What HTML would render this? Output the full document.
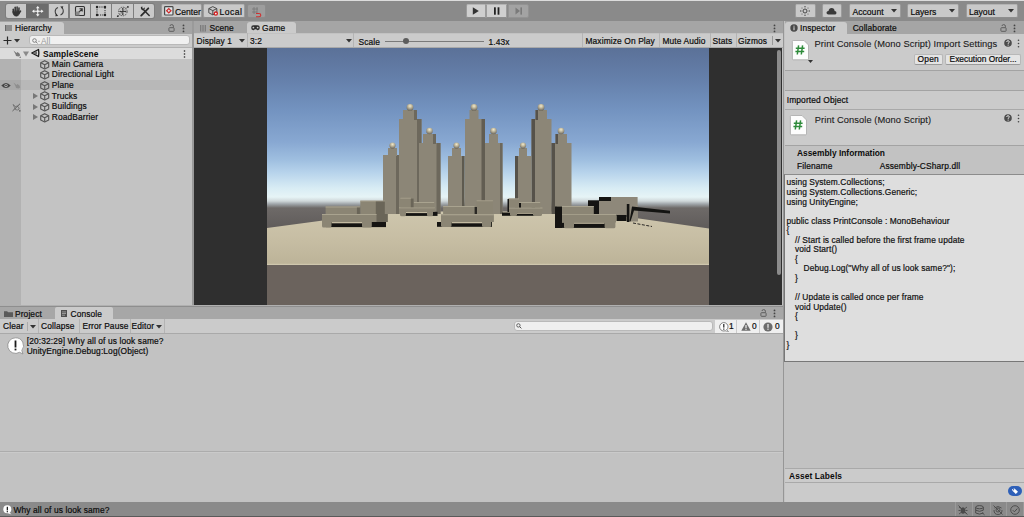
<!DOCTYPE html>
<html><head><meta charset="utf-8">
<style>
*{margin:0;padding:0;box-sizing:border-box}
html,body{width:1024px;height:517px;overflow:hidden;background:#c2c2c2}
body{position:relative;font-family:"Liberation Sans",sans-serif;font-size:8.4px;color:#0c0c0c;line-height:1}
.a{position:absolute}
.t{position:absolute;white-space:nowrap;line-height:10px;-webkit-text-stroke:0.2px currentColor}
.b{position:absolute;background:#c6c6c6;border:1px solid #9c9c9c;border-top-color:#b4b4b4;border-bottom-color:#8e8e8e;border-radius:2px}
svg{position:absolute;overflow:visible}
</style></head><body>
<!-- ============ TOP TOOLBAR ============ -->
<div class="a" style="left:0;top:0;width:1024px;height:1px;background:#dcdcdc"></div>
<div class="a" style="left:0;top:1px;width:1024px;height:20px;background:#8a8a8a"></div>
<!-- tool group -->
<div class="a" style="left:5px;top:3px;width:150px;height:16px;background:#7e7e7e;border-radius:3px"></div>
<div class="b" style="left:6px;top:4px;width:20px;height:14px;border:none;background:#c9c9c9;border-radius:2px 0 0 2px"></div>
<div class="a" style="left:26px;top:4px;width:21.5px;height:14px;background:#6c6c6c"></div>
<div class="b" style="left:48.5px;top:4px;width:19.5px;height:14px;border:none;background:#c9c9c9;border-radius:0"></div>
<div class="b" style="left:69.5px;top:4px;width:20.5px;height:14px;border:none;background:#c9c9c9;border-radius:0"></div>
<div class="b" style="left:91px;top:4px;width:19.5px;height:14px;border:none;background:#c9c9c9;border-radius:0"></div>
<div class="b" style="left:112px;top:4px;width:20.5px;height:14px;border:none;background:#c9c9c9;border-radius:0"></div>
<div class="b" style="left:134px;top:4px;width:20px;height:14px;border:none;background:#c9c9c9;border-radius:0 2px 2px 0"></div>
<!-- hand -->
<svg style="left:11px;top:5.8px" width="10.5" height="10.5" viewBox="0 0 10.5 10.5"><g fill="#363636" stroke="#363636" stroke-linecap="round"><path d="M2.3 3.2L2.3 6.5" stroke-width="1.5"/><path d="M4.2 1.2L4.2 5.5" stroke-width="1.5"/><path d="M6.1 1L6.1 5.5" stroke-width="1.5"/><path d="M8 2L7.8 5.8" stroke-width="1.5"/><path d="M9.6 5L8.2 7.2" stroke-width="1.4"/><path d="M1.8 5.5Q1.6 8.6 3.5 9.8Q5.5 10.6 7.2 9.6Q8.4 8.6 8.6 6.2L8 5Z" stroke-width="0.6"/></g></svg>
<!-- move (white) -->
<svg style="left:31.5px;top:5.8px" width="11.5" height="10.5" viewBox="0 0 11.5 10.5"><g fill="none" stroke="#f4f4f4" stroke-width="1"><path d="M5.75 1.5V9M1.5 5.25H10"/></g><g fill="#f4f4f4"><path d="M5.75 0L7.6 2.3H3.9Z M5.75 10.5L7.6 8.2H3.9Z M0 5.25L2.3 3.5V7Z M11.5 5.25L9.2 3.5V7Z"/></g><circle cx="5.75" cy="5.25" r="1.1" fill="#f4f4f4"/></svg>
<!-- rotate -->
<svg style="left:53.5px;top:5.8px" width="10.5" height="10.5" viewBox="0 0 10.5 10.5"><g fill="none" stroke="#444" stroke-width="1.1"><path d="M4 1.4Q1.2 2.4 1.2 5.4Q1.2 7.6 2.6 8.8"/><path d="M6.5 9.1Q9.3 8.1 9.3 5.1Q9.3 2.9 7.9 1.7"/></g><g fill="#333"><path d="M1.2 10.3L4.2 10L2.2 7.6Z M9.3 0.2L6.3 0.5L8.3 2.9Z"/></g></svg>
<!-- scale -->
<svg style="left:74px;top:5px" width="12" height="12" viewBox="0 0 12 12"><g fill="none" stroke="#333" stroke-width="1.1"><rect x="1.5" y="1.5" width="9" height="9" rx="1"/><path d="M3.5 8.5L8.2 3.8M5.5 3.8H8.2V6.5"/></g><rect x="1.5" y="6.5" width="4" height="4" fill="#888"/></svg>
<!-- rect -->
<svg style="left:95px;top:5px" width="12" height="12" viewBox="0 0 12 12"><g fill="none" stroke="#333" stroke-width="1" stroke-dasharray="1.2 1"><rect x="2" y="2" width="8" height="8"/></g><g fill="#222"><circle cx="2" cy="2" r="1.2"/><circle cx="10" cy="2" r="1.2"/><circle cx="2" cy="10" r="1.2"/><circle cx="10" cy="10" r="1.2"/></g></svg>
<!-- transform -->
<svg style="left:116.5px;top:5.8px" width="12" height="11" viewBox="0 0 12 11"><circle cx="5.8" cy="5.5" r="4.3" fill="none" stroke="#4a4a4a" stroke-width="0.9" stroke-dasharray="1.6 0.9"/><g stroke="#333" stroke-width="0.9"><path d="M5.8 2.6V8.4M2.9 5.5H8.7"/></g><g fill="#333"><path d="M5.8 1.8L6.9 3.2H4.7Z M5.8 9.2L6.9 7.8H4.7Z M2.1 5.5L3.5 4.4V6.6Z M9.5 5.5L8.1 4.4V6.6Z"/></g><path d="M0.6 10.5L11 0.6" stroke="#444" stroke-width="0.8" stroke-dasharray="1.4 1"/><circle cx="10.9" cy="0.9" r="0.9" fill="#333"/><circle cx="0.8" cy="10.2" r="0.9" fill="#333"/></svg>
<!-- custom tools -->
<svg style="left:139.5px;top:5.8px" width="10" height="10.5" viewBox="0 0 10 10.5"><path d="M1.2 9.6L8.3 2.3" stroke="#2e2e2e" stroke-width="1.8" stroke-linecap="round"/><path d="M0.5 10.2L1.6 8.5L2.3 9.3Z" fill="#2e2e2e"/><path d="M3.8 4L9.2 9.5" stroke="#2e2e2e" stroke-width="1.5" stroke-linecap="round"/><path d="M0.8 1.3Q0.6 3.4 2.2 4.2Q3.6 4.6 4.4 3.6Q5.2 2.6 4.6 1.2L3.6 2.4L2.4 2.2L2.4 0.6Q1.4 0.6 0.8 1.3Z" fill="#2e2e2e"/></svg>

<!-- Center / Local / Snap -->
<div class="b" style="left:160.5px;top:4px;width:41.5px;height:14px;background:#c9c9c9"></div>
<svg style="left:164px;top:6.2px" width="9.6" height="9.6" viewBox="0 0 9.6 9.6"><rect x="0.6" y="0.6" width="8.4" height="8.4" rx="0.8" fill="#dfe6e8" stroke="#4a4a4a" stroke-width="1.2"/><path d="M4.8 2.6L7 4.8L4.8 7L2.6 4.8Z" fill="none" stroke="#d02828" stroke-width="1.2"/></svg>
<div class="t" style="left:175px;top:6.7px;font-size:8.6px">Center</div>
<div class="b" style="left:203px;top:4px;width:42px;height:14px;background:#c9c9c9"></div>
<svg style="left:207.5px;top:6px" width="11" height="10" viewBox="0 0 11 10"><g fill="none" stroke="#3e3e3e" stroke-width="0.9" stroke-linejoin="round"><path d="M0.8 2.6L4.8 0.6L8.8 2.6V6.8L4.8 8.8L0.8 6.8Z M0.8 2.6L4.8 4.6L8.8 2.6 M4.8 4.6V8.8"/></g><circle cx="7.8" cy="7.6" r="1.6" fill="#f4f4f4" stroke="#d42020" stroke-width="1.3"/></svg>
<div class="t" style="left:219.5px;top:6.7px;font-size:8.6px;letter-spacing:0.45px">Local</div>
<div class="b" style="left:247px;top:4px;width:19px;height:14px;background:#9d9d9d;border-color:#8c8c8c"></div>
<svg style="left:251px;top:5.5px" width="11" height="11" viewBox="0 0 11 11"><g fill="none" stroke="#777" stroke-width="0.8"><path d="M1 3H7M1 6H6M3 1V8M6 1V7"/></g><path d="M5 7.5H8Q9.8 7.5 9.8 9.2Q9.8 10.8 8 10.8H5" fill="none" stroke="#d03030" stroke-width="1.1"/></svg>

<!-- play buttons -->
<div class="b" style="left:465.5px;top:4px;width:20.5px;height:14px;background:#cfcfcf;border-radius:2px 0 0 2px"></div>
<div class="b" style="left:486px;top:4px;width:21px;height:14px;background:#cfcfcf;border-radius:0"></div>
<div class="b" style="left:507.5px;top:4px;width:21.5px;height:14px;background:#a3a3a3;border-color:#939393;border-radius:0 2px 2px 0"></div>
<svg style="left:472px;top:7px" width="8" height="8" viewBox="0 0 8 8"><path d="M0.8 0.3L6.8 4L0.8 7.7Z" fill="#333"/></svg>
<svg style="left:493px;top:7px" width="8" height="8" viewBox="0 0 8 8"><rect x="1" y="0.3" width="1.8" height="7.4" fill="#222"/><rect x="4.6" y="0.3" width="1.8" height="7.4" fill="#222"/></svg>
<svg style="left:514.5px;top:7px" width="8" height="8" viewBox="0 0 8 8"><path d="M0.5 0.5L5 4L0.5 7.5Z" fill="#7a7a7a"/><rect x="5.4" y="0.4" width="1.6" height="7.2" fill="#7a7a7a"/></svg>

<!-- right buttons -->
<div class="b" style="left:794.5px;top:4px;width:21px;height:14px;background:#c9c9c9"></div>
<svg style="left:800px;top:6px" width="10" height="10" viewBox="0 0 10 10"><circle cx="5" cy="5" r="2" fill="none" stroke="#444" stroke-width="1"/><g fill="#444"><circle cx="5" cy="0.8" r="0.7"/><circle cx="5" cy="9.2" r="0.7"/><circle cx="0.8" cy="5" r="0.7"/><circle cx="9.2" cy="5" r="0.7"/><circle cx="2" cy="2" r="0.5"/><circle cx="8" cy="2" r="0.5"/><circle cx="2" cy="8" r="0.5"/><circle cx="8" cy="8" r="0.5"/></g></svg>
<div class="b" style="left:821.5px;top:4px;width:20.5px;height:14px;background:#c9c9c9"></div>
<svg style="left:826px;top:7px" width="11" height="8" viewBox="0 0 11 8"><path d="M2.5 7.5Q0.3 7.5 0.5 5.5Q0.8 3.8 2.5 4Q3 1 5.6 1Q8.4 1.2 8.6 4Q10.6 4.2 10.5 6Q10.3 7.5 8.6 7.5Z" fill="#3a3a3a"/></svg>
<div class="b" style="left:849px;top:4px;width:52px;height:14px;background:#c9c9c9"></div>
<div class="t" style="left:852.5px;top:6.7px;font-size:8.6px">Account</div>
<svg style="left:891px;top:9px" width="6" height="4" viewBox="0 0 6 4"><path d="M0 0H6L3 3.5Z" fill="#333"/></svg>
<div class="b" style="left:907px;top:4px;width:52px;height:14px;background:#c9c9c9"></div>
<div class="t" style="left:910.5px;top:6.7px;font-size:8.6px">Layers</div>
<svg style="left:949px;top:9px" width="6" height="4" viewBox="0 0 6 4"><path d="M0 0H6L3 3.5Z" fill="#333"/></svg>
<div class="b" style="left:965.5px;top:4px;width:52.5px;height:14px;background:#c9c9c9"></div>
<div class="t" style="left:969px;top:6.7px;font-size:8.6px">Layout</div>
<svg style="left:1007.5px;top:9px" width="6" height="4" viewBox="0 0 6 4"><path d="M0 0H6L3 3.5Z" fill="#333"/></svg>


<!-- ============ TAB STRIPS ============ -->
<div class="a" style="left:0;top:21px;width:192px;height:13px;background:#a5a5a5"></div>
<div class="a" style="left:194px;top:21px;width:589px;height:12px;background:#a5a5a5"></div>
<div class="a" style="left:785px;top:21px;width:239px;height:13px;background:#a5a5a5"></div>
<div class="a" style="left:0;top:306.6px;width:783px;height:12.6px;background:#a7a7a7"></div>

<!-- separators -->
<div class="a" style="left:192.3px;top:21px;width:1.5px;height:285px;background:#9a9a9a"></div>
<div class="a" style="left:782.5px;top:21px;width:1.8px;height:481px;background:#969696"></div>
<div class="a" style="left:0;top:305px;width:783px;height:0.5px;background:#b0b0b0"></div><div class="a" style="left:0;top:305.5px;width:783px;height:1.2px;background:#8e8e8e"></div>

<!-- ============ HIERARCHY ============ -->
<div class="a" style="left:0;top:34px;width:192px;height:271px;background:#c3c3c3"></div>
<!-- tab -->
<div class="a" style="left:0;top:21.5px;width:64px;height:12.5px;background:#cbcbcb;border-radius:0 3px 0 0"></div>
<div class="a" style="left:5px;top:25px;width:7px;height:6px;background:linear-gradient(90deg,#6a6a6a 0 1px,#8e8e8e 1px)"></div>
<div class="t" style="left:15px;top:23px;letter-spacing:0.12px">Hierarchy</div>
<!-- lock + kebab -->
<svg style="left:168px;top:24px" width="7" height="8" viewBox="0 0 7 8"><path d="M5.4 3.5V2.2Q5.4 0.6 3.7 0.6Q2.1 0.6 2 2" fill="none" stroke="#5e5e5e" stroke-width="1"/><rect x="0.9" y="3.7" width="5.2" height="3.6" rx="0.6" fill="none" stroke="#5e5e5e" stroke-width="1"/></svg>
<svg style="left:182px;top:23.5px" width="3" height="9" viewBox="0 0 3 9"><g fill="#444"><circle cx="1.5" cy="1.4" r="0.9"/><circle cx="1.5" cy="4.4" r="0.9"/><circle cx="1.5" cy="7.4" r="0.9"/></g></svg>
<!-- toolbar row -->
<div class="a" style="left:0;top:34px;width:192px;height:13px;background:#cbcbcb"></div>
<div class="a" style="left:0;top:47px;width:192px;height:1px;background:#b2b2b2"></div>
<svg style="left:3px;top:36px" width="9" height="9" viewBox="0 0 9 9"><path d="M4.5 0.5V8.5M0.5 4.5H8.5" stroke="#2a2a2a" stroke-width="1.2"/></svg>
<svg style="left:13.5px;top:39px" width="6" height="4" viewBox="0 0 6 4"><path d="M0 0H6L3 3.5Z" fill="#333"/></svg>
<div class="a" style="left:29.3px;top:35.4px;width:161px;height:10px;background:#f0f0f0;border:1px solid #b9b9b9;border-radius:3px"></div>
<svg style="left:32px;top:37.5px" width="8" height="6" viewBox="0 0 8 6"><circle cx="2.5" cy="2.5" r="1.8" fill="none" stroke="#777" stroke-width="0.9"/><path d="M3.8 3.8L5.6 5.4M6.5 3.3H7.5" stroke="#777" stroke-width="0.9"/></svg>
<div class="t" style="left:41px;top:36px;color:#9a9a9a;-webkit-text-stroke:0">All</div>
<!-- scene row -->
<div class="a" style="left:0;top:48px;width:192px;height:10.7px;background:#dcdcdc"></div>
<!-- left column -->
<div class="a" style="left:0;top:58.7px;width:21px;height:246.3px;background:#b2b2b2"></div>
<!-- plane highlight -->
<div class="a" style="left:0;top:80.4px;width:21px;height:10px;background:#a9a9a9"></div>
<div class="a" style="left:21px;top:80.4px;width:171px;height:10px;background:#b8b8b8"></div>

<!-- scene row contents -->
<svg style="left:12.5px;top:49.5px" width="9" height="8" viewBox="0 0 9 8"><path d="M0.5 0.5L3.5 3L4.5 2L6.5 3.5L7.2 5.5L5.5 6.5L3 6L2.5 4.2Z" fill="#7a7a7a"/><circle cx="7.2" cy="7.2" r="0.8" fill="#777"/></svg>
<svg style="left:23px;top:50.5px" width="6" height="6" viewBox="0 0 6 6"><path d="M0 0.5H6L3 5.5Z" fill="#8a8a8a"/></svg>
<svg style="left:31px;top:49px" width="8.5" height="8" viewBox="0 0 8.5 8"><path d="M7.5 0.5L0.8 4L7.5 7.5Q8.2 4 7.5 0.5Z" fill="none" stroke="#1a1a1a" stroke-width="1.3" stroke-linejoin="round"/><path d="M5.2 2.5L5.2 5.5M5.2 4L3 4" stroke="#1a1a1a" stroke-width="0.8"/></svg>
<div class="t" style="left:43px;top:48.5px;font-weight:bold;letter-spacing:0.1px;-webkit-text-stroke:0">SampleScene</div>
<svg style="left:183px;top:49.5px" width="3" height="8" viewBox="0 0 3 8"><g fill="#222"><circle cx="1.5" cy="1" r="0.8"/><circle cx="1.5" cy="4" r="0.8"/><circle cx="1.5" cy="7" r="0.8"/></g></svg>

<!-- items -->
<!--cube icon def-->

<svg style="left:40px;top:59.5px" width="10" height="10" viewBox="0 0 10 10"><g><g fill="none" stroke="#555" stroke-width="1.15" stroke-linejoin="round"><path d="M4.7 0.7L8.7 2.7V6.9L4.7 8.9L0.7 6.9V2.7Z"/><path d="M1.2 3L4.7 4.8L8.2 3M4.7 4.8V8.6"/></g></g></svg>
<div class="t" style="left:51.8px;top:58.6px;letter-spacing:0.12px">Main Camera</div>
<svg style="left:40px;top:70px" width="10" height="10" viewBox="0 0 10 10"><g><g fill="none" stroke="#555" stroke-width="1.15" stroke-linejoin="round"><path d="M4.7 0.7L8.7 2.7V6.9L4.7 8.9L0.7 6.9V2.7Z"/><path d="M1.2 3L4.7 4.8L8.2 3M4.7 4.8V8.6"/></g></g></svg>
<div class="t" style="left:51.8px;top:69.2px;letter-spacing:0.12px">Directional Light</div>
<svg style="left:40px;top:80.7px" width="10" height="10" viewBox="0 0 10 10"><g><g fill="none" stroke="#555" stroke-width="1.15" stroke-linejoin="round"><path d="M4.7 0.7L8.7 2.7V6.9L4.7 8.9L0.7 6.9V2.7Z"/><path d="M1.2 3L4.7 4.8L8.2 3M4.7 4.8V8.6"/></g></g></svg>
<div class="t" style="left:51.8px;top:79.9px;letter-spacing:0.12px">Plane</div>
<svg style="left:40px;top:91.3px" width="10" height="10" viewBox="0 0 10 10"><g><g fill="none" stroke="#555" stroke-width="1.15" stroke-linejoin="round"><path d="M4.7 0.7L8.7 2.7V6.9L4.7 8.9L0.7 6.9V2.7Z"/><path d="M1.2 3L4.7 4.8L8.2 3M4.7 4.8V8.6"/></g></g></svg>
<div class="t" style="left:51.8px;top:90.5px;letter-spacing:0.12px">Trucks</div>
<svg style="left:40px;top:102px" width="10" height="10" viewBox="0 0 10 10"><g><g fill="none" stroke="#555" stroke-width="1.15" stroke-linejoin="round"><path d="M4.7 0.7L8.7 2.7V6.9L4.7 8.9L0.7 6.9V2.7Z"/><path d="M1.2 3L4.7 4.8L8.2 3M4.7 4.8V8.6"/></g></g></svg>
<div class="t" style="left:51.8px;top:101.2px;letter-spacing:0.12px">Buildings</div>
<svg style="left:40px;top:112.6px" width="10" height="10" viewBox="0 0 10 10"><g><g fill="none" stroke="#555" stroke-width="1.15" stroke-linejoin="round"><path d="M4.7 0.7L8.7 2.7V6.9L4.7 8.9L0.7 6.9V2.7Z"/><path d="M1.2 3L4.7 4.8L8.2 3M4.7 4.8V8.6"/></g></g></svg>
<div class="t" style="left:51.8px;top:111.8px;letter-spacing:0.12px">RoadBarrier</div>
<!-- foldouts -->
<svg style="left:32.5px;top:93px" width="5" height="6" viewBox="0 0 5 6"><path d="M0 0L5 3L0 6Z" fill="#777"/></svg>
<svg style="left:32.5px;top:103.7px" width="5" height="6" viewBox="0 0 5 6"><path d="M0 0L5 3L0 6Z" fill="#777"/></svg>
<svg style="left:32.5px;top:114.3px" width="5" height="6" viewBox="0 0 5 6"><path d="M0 0L5 3L0 6Z" fill="#777"/></svg>
<!-- eye + pick on plane row -->
<svg style="left:0.5px;top:82px" width="10" height="7" viewBox="0 0 10 7"><path d="M0.3 3.5Q5 -1.5 9.7 3.5Q5 8.5 0.3 3.5Z" fill="#444"/><circle cx="5" cy="3.5" r="1.6" fill="#bbb"/><circle cx="5" cy="3.5" r="0.8" fill="#333"/></svg>
<svg style="left:12.5px;top:81.5px" width="9" height="8" viewBox="0 0 9 8"><path d="M0.5 0.5L3.5 3L4.5 2L6.5 3.5L7.2 5.5L5.5 6.5L3 6L2.5 4.2Z" fill="#8e8e8e"/></svg>
<!-- pick disabled on buildings row -->
<svg style="left:12px;top:103px" width="9" height="9" viewBox="0 0 9 9"><path d="M1 1.5L3.8 3.8L4.8 2.8L6.6 4.2L7.2 6L5.6 7L3.4 6.6L2.8 4.8Z" fill="none" stroke="#6a6a6a" stroke-width="0.8"/><path d="M0.5 8L8 0.8" stroke="#555" stroke-width="0.9"/><circle cx="7.8" cy="7.8" r="0.9" fill="#666"/></svg>


<!-- ============ GAME ============ -->
<div class="a" style="left:194px;top:33.5px;width:589px;height:14.5px;background:#cbcbcb"></div>
<div class="a" style="left:194px;top:48px;width:588px;height:257px;background:#2f2f2f"></div>
<!-- tabs -->
<div class="a" style="left:247px;top:21.5px;width:49px;height:11.5px;background:#cbcbcb;border-radius:3px 3px 0 0"></div>
<svg style="left:199.8px;top:24.8px" width="6" height="6.5" viewBox="0 0 6 6.5"><rect x="0" y="0" width="6" height="6.5" fill="#7c7c7c"/><g fill="#a8a8a8"><rect x="1.3" y="0" width="0.6" height="6.5"/><rect x="2.7" y="0" width="0.6" height="6.5"/><rect x="4.1" y="0" width="0.6" height="6.5"/></g></svg>
<div class="t" style="left:209.5px;top:23px;letter-spacing:0.12px">Scene</div>
<svg style="left:251px;top:25.3px" width="9" height="5.5" viewBox="0 0 9 5.5"><path d="M2.5 0.3H6.5Q8.8 0.3 8.8 2.75Q8.8 5.2 6.8 5.2Q5.8 5.2 5.2 4.2H3.8Q3.2 5.2 2.2 5.2Q0.2 5.2 0.2 2.75Q0.2 0.3 2.5 0.3Z" fill="#2e2e2e"/><circle cx="2.4" cy="2.6" r="0.9" fill="#cbcbcb"/><circle cx="6.6" cy="2.6" r="0.9" fill="#cbcbcb"/></svg>
<div class="t" style="left:262px;top:23px;letter-spacing:0.12px">Game</div>
<svg style="left:772.5px;top:23.5px" width="3" height="9" viewBox="0 0 3 9"><g fill="#444"><circle cx="1.5" cy="1.4" r="0.9"/><circle cx="1.5" cy="4.4" r="0.9"/><circle cx="1.5" cy="7.4" r="0.9"/></g></svg>
<!-- toolbar -->
<div class="a" style="left:194px;top:47px;width:589px;height:1px;background:#a9a9a9"></div>
<div class="t" style="left:196.5px;top:36px;letter-spacing:0.12px">Display 1</div>
<svg style="left:238.5px;top:39px" width="6" height="4" viewBox="0 0 6 4"><path d="M0 0H6L3 3.5Z" fill="#333"/></svg>
<div class="a" style="left:246.5px;top:33px;width:1px;height:14px;background:#b4b4b4"></div>
<div class="t" style="left:250px;top:36px;letter-spacing:0.12px">3:2</div>
<svg style="left:345.5px;top:39px" width="6" height="4" viewBox="0 0 6 4"><path d="M0 0H6L3 3.5Z" fill="#333"/></svg>
<div class="a" style="left:353px;top:33px;width:1px;height:14px;background:#b4b4b4"></div>
<div class="t" style="left:358.5px;top:36.5px;letter-spacing:0.12px">Scale</div>
<div class="a" style="left:385px;top:41px;width:99px;height:1px;background:#7a7a7a"></div>
<div class="a" style="left:402.5px;top:38px;width:6px;height:6px;border-radius:50%;background:#5c5c5c"></div>
<div class="t" style="left:488.5px;top:36.5px;letter-spacing:0.12px">1.43x</div>
<div class="a" style="left:582px;top:33px;width:1px;height:14px;background:#b4b4b4"></div>
<div class="t" style="left:585.5px;top:36px;letter-spacing:0.12px">Maximize On Play</div>
<div class="a" style="left:658.5px;top:33px;width:1px;height:14px;background:#b4b4b4"></div>
<div class="t" style="left:662.5px;top:36px;letter-spacing:0.12px">Mute Audio</div>
<div class="a" style="left:709.5px;top:33px;width:1px;height:14px;background:#b4b4b4"></div>
<div class="t" style="left:712.5px;top:36px;letter-spacing:0.12px">Stats</div>
<div class="a" style="left:735.5px;top:33px;width:1px;height:14px;background:#b4b4b4"></div>
<div class="t" style="left:738px;top:36px;letter-spacing:0.12px">Gizmos</div>
<div class="a" style="left:772px;top:36px;width:1px;height:9px;background:#999"></div>
<svg style="left:775px;top:39px" width="6" height="4" viewBox="0 0 6 4"><path d="M0 0H6L3 3.5Z" fill="#333"/></svg>
<!-- scrollbar -->

<div class="a" style="left:777.4px;top:50px;width:3.6px;height:224.5px;background:#8c8c8c;border-radius:2px"></div>

<!-- scene -->
<svg style="left:267px;top:48px" width="442" height="257" viewBox="267 48 442 257">
<defs>
<linearGradient id="sky" x1="0" y1="48" x2="0" y2="230" gradientUnits="userSpaceOnUse">
<stop offset="0.0000" stop-color="#5b7198"/>
<stop offset="0.1758" stop-color="#6580ab"/>
<stop offset="0.3407" stop-color="#7393c0"/>
<stop offset="0.5165" stop-color="#88a8d2"/>
<stop offset="0.6154" stop-color="#9fbfe0"/>
<stop offset="0.6868" stop-color="#b8d4ec"/>
<stop offset="0.7692" stop-color="#d8ecf4"/>
<stop offset="0.8187" stop-color="#e6f4f6"/>
<stop offset="0.8407" stop-color="#d0d8da"/>
<stop offset="0.8571" stop-color="#a0a6aa"/>
<stop offset="0.8791" stop-color="#6e6a68"/>
<stop offset="1.0000" stop-color="#5e5a59"/>
</linearGradient>
<radialGradient id="sph" cx="0.5" cy="0.3" r="0.7"><stop offset="0" stop-color="#f0e8cc"/><stop offset="0.35" stop-color="#c8c0a4"/><stop offset="0.75" stop-color="#8c8677"/><stop offset="1" stop-color="#6a6558"/></radialGradient>
</defs>
<rect x="267" y="48" width="442" height="182" fill="url(#sky)"/>
<!-- ground plane -->
<linearGradient id="pl" x1="0" y1="211" x2="0" y2="265" gradientUnits="userSpaceOnUse"><stop offset="0" stop-color="#cec6ad"/><stop offset="0.5" stop-color="#c7bea4"/><stop offset="1" stop-color="#bcb398"/></linearGradient><path d="M267 228L390 211.5L590 211.5L709 228.5L709 266L267 266Z" fill="url(#pl)"/><rect x="267" y="263.8" width="442" height="1.2" fill="#cfc7ad"/>
<rect x="267" y="265" width="442" height="40" fill="#6b635d"/>

<!-- buildings group 1 -->
<g>
<rect x="399" y="119" width="22.5" height="95" fill="#8c8677"/><rect x="417" y="119" width="4.5" height="95" fill="#6d685c"/>
<rect x="403" y="110" width="14" height="10" fill="#8c8677"/><rect x="414" y="110" width="3" height="10" fill="#6d685c"/>
<circle cx="410" cy="107.4" r="3.4" fill="url(#sph)"/>
<rect x="383" y="155" width="16" height="59" fill="#8c8677"/><rect x="396" y="155" width="3" height="59" fill="#6d685c"/>
<rect x="388" y="148" width="9" height="8" fill="#8c8677"/>
<circle cx="392.5" cy="145.6" r="3.1" fill="url(#sph)"/>
<rect x="419" y="143" width="21.5" height="71" fill="#8c8677"/><rect x="436.5" y="143" width="4" height="71" fill="#6d685c"/>
<rect x="423" y="134" width="13" height="10" fill="#8c8677"/><rect x="433" y="134" width="3" height="10" fill="#6d685c"/>
<circle cx="429.5" cy="131" r="3.3" fill="url(#sph)"/>
</g>
<!-- group 2 -->
<g>
<rect x="448" y="156" width="16.5" height="58" fill="#8c8677"/><rect x="462" y="156" width="2.5" height="58" fill="#5e5a4f"/>
<rect x="452" y="148" width="9" height="9" fill="#8c8677"/>
<circle cx="456.5" cy="145.6" r="3.1" fill="url(#sph)"/>
<rect x="465" y="119" width="20" height="95" fill="#8c8677"/><rect x="481.5" y="119" width="3.5" height="95" fill="#625d52"/>
<rect x="469.5" y="110" width="9" height="10" fill="#8c8677"/>
<circle cx="474" cy="107.4" r="3.4" fill="url(#sph)"/>
<rect x="485" y="143" width="17.5" height="71" fill="#8c8677"/><rect x="500" y="143" width="2.5" height="71" fill="#6d685c"/>
<rect x="489" y="134" width="9" height="10" fill="#8c8677"/>
<circle cx="493.5" cy="131" r="3.3" fill="url(#sph)"/>
</g>
<!-- group 3 -->
<g>
<rect x="531.5" y="119" width="20" height="95" fill="#8c8677"/><rect x="531.5" y="119" width="3.5" height="95" fill="#56524a"/>
<rect x="535.5" y="110" width="11.5" height="10" fill="#8c8677"/><rect x="535.5" y="110" width="2.5" height="10" fill="#56524a"/>
<circle cx="541" cy="107.4" r="3.4" fill="url(#sph)"/>
<rect x="515" y="156" width="16.5" height="58" fill="#8c8677"/><rect x="515" y="156" width="3" height="58" fill="#56524a"/>
<rect x="519" y="148" width="8" height="9" fill="#8c8677"/>
<circle cx="523" cy="145.6" r="3.1" fill="url(#sph)"/>
<rect x="551.5" y="143" width="20" height="71" fill="#8c8677"/><rect x="551.5" y="143" width="3.5" height="71" fill="#56524a"/>
<rect x="555.5" y="134" width="11.5" height="10" fill="#8c8677"/><rect x="555.5" y="134" width="2.5" height="10" fill="#56524a"/>
<circle cx="561" cy="131" r="3.3" fill="url(#sph)"/>
</g>

<!-- trucks -->
<g><rect x="404.0" y="211.8" width="33.5" height="4.1" fill="#151412"/><rect x="406.0" y="211.8" width="21.0" height="1.3" fill="#c4bba2"/><rect x="399.0" y="207.3" width="35.7" height="4.5" fill="#8b8574"/><rect x="399.0" y="207.3" width="35.7" height="1.0" fill="#a9a38f"/><path d="M400.0 211.3H406.0V214.7Q406.0 216.2 404.5 216.2H401.5Q400.0 216.2 400.0 214.7Z" fill="#8b8574"/><path d="M427.0 211.3H433.0V214.7Q433.0 216.2 431.5 216.2H428.5Q427.0 216.2 427.0 214.7Z" fill="#8b8574"/><rect x="413.6" y="202.0" width="20.6" height="5.3" fill="#8b8574"/><rect x="413.6" y="202.0" width="20.6" height="1.0" fill="#a9a38f"/><rect x="400.3" y="197.8" width="10.8" height="9.5" fill="#8b8574"/><rect x="400.3" y="197.8" width="10.8" height="0.8" fill="#a9a38f"/><rect x="410.8" y="198.6" width="2.8" height="8.7" fill="#6a6558"/></g>
<g><rect x="502.0" y="212.5" width="38.0" height="3.3" fill="#151412"/><rect x="517.0" y="212.5" width="16.0" height="1.3" fill="#c4bba2"/><rect x="508.5" y="207.5" width="34.0" height="5.0" fill="#8b8574"/><rect x="508.5" y="207.5" width="34.0" height="1.0" fill="#a9a38f"/><path d="M510.0 212.0H517.0V214.6Q517.0 216.1 515.5 216.1H511.5Q510.0 216.1 510.0 214.6Z" fill="#8b8574"/><path d="M533.0 212.0H542.0V214.6Q542.0 216.1 540.5 216.1H534.5Q533.0 216.1 533.0 214.6Z" fill="#8b8574"/><rect x="519.1" y="202.0" width="21.1" height="5.5" fill="#8b8574"/><rect x="519.1" y="202.0" width="21.1" height="1.0" fill="#a9a38f"/><rect x="508.5" y="198.5" width="10.6" height="9.0" fill="#8b8574"/><rect x="508.5" y="198.5" width="10.6" height="0.8" fill="#a9a38f"/><rect x="507.5" y="199.0" width="1.5" height="13.0" fill="#151412"/><rect x="519.0" y="203.0" width="2.0" height="4.5" fill="#151412"/></g>
<g><rect x="326.0" y="222.0" width="60.0" height="5.1" fill="#151412"/><rect x="331.5" y="222.0" width="30.5" height="1.3" fill="#c4bba2"/><rect x="322.0" y="214.0" width="65.7" height="8.0" fill="#8b8574"/><rect x="376.5" y="214.0" width="11.2" height="8.0" fill="#6a6558"/><rect x="322.0" y="214.0" width="54.5" height="1.0" fill="#a9a38f"/><path d="M322.0 221.5H331.5V225.9Q331.5 227.4 330.0 227.4H323.5Q322.0 227.4 322.0 225.9Z" fill="#8b8574"/><path d="M362.0 221.5H371.8V225.9Q371.8 227.4 370.3 227.4H363.5Q362.0 227.4 362.0 225.9Z" fill="#8b8574"/><rect x="325.6" y="206.5" width="34.3" height="7.5" fill="#8b8574"/><rect x="325.6" y="206.5" width="34.3" height="1.0" fill="#a9a38f"/><rect x="356.9" y="207.5" width="3.0" height="6.5" fill="#6a6558"/><rect x="360.3" y="200.7" width="24.5" height="13.3" fill="#8b8574"/><rect x="360.3" y="200.7" width="24.5" height="0.8" fill="#a9a38f"/><rect x="375.8" y="201.5" width="9.0" height="12.5" fill="#6a6558"/></g>
<g><rect x="437.0" y="222.0" width="55.0" height="4.8" fill="#151412"/><rect x="451.5" y="222.0" width="30.5" height="1.3" fill="#c4bba2"/><rect x="441.0" y="214.3" width="52.9" height="7.7" fill="#8b8574"/><rect x="441.0" y="214.3" width="52.9" height="1.0" fill="#a9a38f"/><path d="M441.0 221.5H451.5V225.6Q451.5 227.1 450.0 227.1H442.5Q441.0 227.1 441.0 225.6Z" fill="#8b8574"/><path d="M482.0 221.5H491.2V225.6Q491.2 227.1 489.7 227.1H483.5Q482.0 227.1 482.0 225.6Z" fill="#8b8574"/><rect x="443.1" y="206.0" width="31.5" height="8.0" fill="#8b8574"/><rect x="443.1" y="206.0" width="31.5" height="1.0" fill="#a9a38f"/><rect x="476.6" y="200.4" width="16.3" height="13.6" fill="#8b8574"/><rect x="476.6" y="200.4" width="16.3" height="0.8" fill="#a9a38f"/><rect x="474.6" y="207.0" width="2.4" height="7.0" fill="#2a2824"/></g>
<g>
<rect x="599" y="197" width="38.6" height="18.5" fill="#8e887a"/>
<rect x="599" y="197" width="12" height="4" fill="#141412"/>
<rect x="616.5" y="215" width="10" height="6" fill="#141412"/>
<rect x="629" y="205" width="9" height="16.5" fill="#8e887a"/>
<rect x="626.8" y="204" width="2.6" height="18" fill="#141412"/>
<path d="M632 206.5L670 210.8L670 213.5L634 210.5L630.5 221.5L629.5 221Z" fill="#141412"/>
<path d="M633 223L652 226.5" stroke="#2a2826" stroke-width="1" stroke-dasharray="3 1.5"/>
</g>
<g><rect x="588" y="200.3" width="11" height="14" fill="#151412"/><rect x="558.0" y="222.5" width="54.0" height="5.4" fill="#151412"/><rect x="574.0" y="222.5" width="30.6" height="1.3" fill="#c4bba2"/><rect x="562.0" y="214.0" width="54.0" height="8.5" fill="#8b8574"/><rect x="562.0" y="214.0" width="54.0" height="1.0" fill="#a9a38f"/><path d="M564.0 222.0H574.0V226.7Q574.0 228.2 572.5 228.2H565.5Q564.0 228.2 564.0 226.7Z" fill="#8b8574"/><path d="M604.6 222.0H615.4V226.7Q615.4 228.2 613.9 228.2H606.1Q604.6 228.2 604.6 226.7Z" fill="#8b8574"/><rect x="557.0" y="206.0" width="36.8" height="8.2" fill="#8b8574"/><rect x="557.0" y="206.0" width="36.8" height="1.0" fill="#a9a38f"/><rect x="555.0" y="206.5" width="7.0" height="21.5" fill="#151412"/></g>
</svg>


<!-- ============ CONSOLE ============ -->
<div class="a" style="left:0;top:319px;width:783px;height:183px;background:#c2c2c2"></div>
<!-- tabs -->
<div class="a" style="left:54.7px;top:307px;width:58.3px;height:12.3px;background:#cbcbcb;border-radius:2px 2px 0 0"></div>
<svg style="left:4px;top:311px" width="9" height="6" viewBox="0 0 9 6"><path d="M0 0.3H3.2L4 1.2H9V6H0Z" fill="#5a5a5a"/></svg>
<div class="t" style="left:15px;top:308.5px;letter-spacing:0.12px">Project</div>
<svg style="left:61px;top:310px" width="6" height="7" viewBox="0 0 6 7"><rect x="0" y="0" width="6" height="7" fill="#4e4e4e"/><g fill="#b8b8b8"><rect x="1" y="1.6" width="4" height="0.7"/><rect x="1" y="3.2" width="4" height="0.7"/><rect x="1" y="4.8" width="3" height="0.7"/></g></svg>
<div class="t" style="left:70.5px;top:308.5px;letter-spacing:0.12px">Console</div>
<svg style="left:759.5px;top:308.5px" width="7" height="8" viewBox="0 0 7 8"><path d="M5.4 3.5V2.2Q5.4 0.6 3.7 0.6Q2.1 0.6 2 2" fill="none" stroke="#5e5e5e" stroke-width="1"/><rect x="0.9" y="3.7" width="5.2" height="3.6" rx="0.6" fill="none" stroke="#5e5e5e" stroke-width="1"/></svg>
<svg style="left:772.5px;top:308.5px" width="3" height="9" viewBox="0 0 3 9"><g fill="#444"><circle cx="1.5" cy="1.4" r="0.9"/><circle cx="1.5" cy="4.4" r="0.9"/><circle cx="1.5" cy="7.4" r="0.9"/></g></svg>
<!-- toolbar -->
<div class="a" style="left:0;top:319px;width:783px;height:14px;background:#cbcbcb"></div>
<div class="a" style="left:0;top:333px;width:783px;height:1px;background:#a9a9a9"></div>
<div class="t" style="left:3px;top:321.2px;letter-spacing:0.12px">Clear</div>
<div class="a" style="left:27px;top:322px;width:1px;height:9px;background:#aaa"></div>
<svg style="left:29.5px;top:325px" width="6" height="4" viewBox="0 0 6 4"><path d="M0 0H6L3 3.5Z" fill="#333"/></svg>
<div class="a" style="left:37.5px;top:319px;width:1px;height:14px;background:#b4b4b4"></div>
<div class="t" style="left:41px;top:321.2px;letter-spacing:0.12px">Collapse</div>
<div class="a" style="left:78.5px;top:319px;width:1px;height:14px;background:#b4b4b4"></div>
<div class="t" style="left:82.5px;top:321.2px;letter-spacing:0.12px">Error Pause</div>
<div class="a" style="left:129.5px;top:319px;width:1px;height:14px;background:#b4b4b4"></div>
<div class="t" style="left:131.5px;top:321.2px;letter-spacing:0.12px">Editor</div>
<svg style="left:156px;top:325px" width="6" height="4" viewBox="0 0 6 4"><path d="M0 0H6L3 3.5Z" fill="#333"/></svg>
<div class="a" style="left:163.5px;top:319px;width:1px;height:14px;background:#b4b4b4"></div>
<!-- search -->
<div class="a" style="left:513.5px;top:320.5px;width:199.5px;height:10.5px;background:#efefef;border:1px solid #b9b9b9;border-radius:3px"></div>
<svg style="left:516px;top:323px" width="6" height="6" viewBox="0 0 6 6"><circle cx="2.4" cy="2.4" r="1.7" fill="none" stroke="#555" stroke-width="0.9"/><path d="M3.6 3.6L5.4 5.4" stroke="#555" stroke-width="1"/></svg>
<!-- counters -->
<div class="a" style="left:715px;top:320px;width:21px;height:13px;background:#efefef"></div>
<div class="a" style="left:737px;top:320px;width:22px;height:13px;background:#efefef"></div>
<div class="a" style="left:760px;top:320px;width:22.5px;height:13px;background:#efefef"></div>
<svg style="left:718.5px;top:321.5px" width="10" height="10" viewBox="0 0 10 10"><circle cx="4.8" cy="4.8" r="4.2" fill="#fff" stroke="#666" stroke-width="0.8"/><path d="M7.5 7.5L9.5 9.5L6.5 9" fill="#fff" stroke="#666" stroke-width="0.6"/><rect x="4.2" y="2" width="1.2" height="3.6" fill="#222"/><rect x="4.2" y="6.5" width="1.2" height="1.2" fill="#222"/></svg>
<div class="t" style="left:729px;top:321.3px">1</div>
<svg style="left:740.5px;top:321.5px" width="10" height="9" viewBox="0 0 10 9"><path d="M5 0.3L9.7 8.7H0.3Z" fill="#6d6d6d"/><rect x="4.4" y="3" width="1.2" height="3.2" fill="#efefef"/><rect x="4.4" y="6.8" width="1.2" height="1.1" fill="#efefef"/></svg>
<div class="t" style="left:752px;top:321.3px">0</div>
<svg style="left:763px;top:321.5px" width="10" height="10" viewBox="0 0 10 10"><circle cx="5" cy="5" r="4.6" fill="#6d6d6d"/><rect x="4.4" y="2" width="1.2" height="3.8" fill="#efefef"/><rect x="4.4" y="6.6" width="1.2" height="1.2" fill="#efefef"/></svg>
<div class="t" style="left:775px;top:321.3px">0</div>
<!-- log entry -->
<svg style="left:6.5px;top:337px" width="18" height="18" viewBox="0 0 18 18"><path d="M8.5 0.8A7.8 7.8 0 1 0 12.5 15.3L16 17L14.8 13.5A7.8 7.8 0 0 0 8.5 0.8Z" fill="#fff" stroke="#8a8a8a" stroke-width="0.8"/><rect x="7.6" y="3.5" width="1.8" height="7" fill="#1a1a1a"/><rect x="7.6" y="11.6" width="1.8" height="1.8" fill="#1a1a1a"/></svg>
<div class="t" style="left:26.7px;top:336px;letter-spacing:0.12px">[20:32:29] Why all of us look same?</div>
<div class="t" style="left:26.7px;top:346px;letter-spacing:0.12px">UnityEngine.Debug:Log(Object)</div>
<div class="a" style="left:0;top:450.5px;width:783px;height:1px;background:#acacac"></div>
<div class="a" style="left:0;top:451.5px;width:783px;height:1px;background:#cacaca"></div>


<!-- ============ INSPECTOR ============ -->
<div class="a" style="left:785px;top:34px;width:239px;height:468px;background:#c2c2c2"></div>
<!-- tabs -->
<div class="a" style="left:785px;top:21.5px;width:62px;height:12.5px;background:#cbcbcb;border-radius:3px 3px 0 0"></div>
<svg style="left:789.5px;top:24px" width="8" height="8" viewBox="0 0 8 8"><circle cx="4" cy="4" r="3.7" fill="#4a4a4a"/><rect x="3.4" y="3.2" width="1.2" height="3" fill="#cbcbcb"/><rect x="3.4" y="1.7" width="1.2" height="1" fill="#cbcbcb"/></svg>
<div class="t" style="left:800px;top:23px;letter-spacing:0.12px">Inspector</div>
<div class="t" style="left:852.7px;top:23px;letter-spacing:0.12px">Collaborate</div>
<svg style="left:999.5px;top:24px" width="7" height="8" viewBox="0 0 7 8"><path d="M5.4 3.5V2.2Q5.4 0.6 3.7 0.6Q2.1 0.6 2 2" fill="none" stroke="#5e5e5e" stroke-width="1"/><rect x="0.9" y="3.7" width="5.2" height="3.6" rx="0.6" fill="none" stroke="#5e5e5e" stroke-width="1"/></svg>
<svg style="left:1013px;top:23.5px" width="3" height="9" viewBox="0 0 3 9"><g fill="#444"><circle cx="1.5" cy="1.4" r="0.9"/><circle cx="1.5" cy="4.4" r="0.9"/><circle cx="1.5" cy="7.4" r="0.9"/></g></svg>

<!-- header -->
<div class="a" style="left:785px;top:34px;width:239px;height:36px;background:#cbcbcb"></div>

<svg style="left:791.5px;top:40.3px" width="17" height="20" viewBox="0 0 17 20"><g><path d="M1.2 0.5H12L16.5 5V19Q16.5 19.8 15.7 19.8H1.2Q0.4 19.8 0.4 19V1.3Q0.4 0.5 1.2 0.5Z" fill="#fdfdfd" stroke="#a8a8a8" stroke-width="0.8"/><g stroke="#2e8b3a" stroke-width="1.5" fill="none"><path d="M6.6 5.3L5.3 14.5M10.6 5.3L9.3 14.5M3.8 8.3H12.6M3.4 11.4H12.2"/></g></g></svg>
<svg style="left:808px;top:60px" width="5" height="3" viewBox="0 0 5 3"><path d="M0 0H5L2.5 3Z" fill="#333"/></svg>
<div class="t" style="left:814.6px;top:39px;font-size:9.3px;letter-spacing:0.08px;color:#1a1a1a;-webkit-text-stroke:0.1px currentColor">Print Console (Mono Script) Import Settings</div>
<svg style="left:1003.5px;top:38.5px" width="8" height="8" viewBox="0 0 8 8"><circle cx="4" cy="4" r="3.8" fill="#4c4c4c"/><path d="M2.7 3Q2.7 1.7 4 1.7Q5.3 1.7 5.3 2.9Q5.3 3.7 4.2 4.2V4.9" fill="none" stroke="#ddd" stroke-width="1"/><rect x="3.6" y="5.6" width="1.1" height="1" fill="#ddd"/></svg>
<svg style="left:1017.3px;top:38.5px" width="3" height="9" viewBox="0 0 3 9"><g fill="#444"><circle cx="1.5" cy="1.2" r="0.8"/><circle cx="1.5" cy="4.5" r="0.8"/><circle cx="1.5" cy="7.8" r="0.8"/></g></svg>
<div class="b" style="left:914px;top:53.6px;width:28.5px;height:11px;background:#e4e4e4;border-color:#b8b8b8;border-bottom-color:#9a9a9a"></div>
<div class="t" style="left:917.6px;top:54px;font-size:8.4px;letter-spacing:0.2px">Open</div>
<div class="b" style="left:945px;top:53.6px;width:75.5px;height:11px;background:#e4e4e4;border-color:#b8b8b8;border-bottom-color:#9a9a9a"></div>
<div class="t" style="left:949.6px;top:54px;font-size:8.4px;letter-spacing:0px">Execution Order...</div>
<div class="a" style="left:785px;top:70px;width:239px;height:1px;background:#a3a3a3"></div>
<!-- empty band -->
<div class="a" style="left:785px;top:71px;width:239px;height:19.5px;background:#c2c2c2"></div>
<div class="a" style="left:785px;top:90px;width:239px;height:1px;background:#a3a3a3"></div>
<!-- imported object -->
<div class="a" style="left:785px;top:91px;width:239px;height:17.5px;background:#cbcbcb"></div>
<div class="t" style="left:786.8px;top:95px;letter-spacing:0.12px">Imported Object</div>
<div class="a" style="left:785px;top:108.5px;width:239px;height:1px;background:#a9a9a9"></div>
<!-- object header -->
<div class="a" style="left:785px;top:109.5px;width:239px;height:35.5px;background:#cbcbcb"></div>
<svg style="left:790px;top:114.5px" width="17" height="20" viewBox="0 0 17 20"><g><path d="M1.2 0.5H12L16.5 5V19Q16.5 19.8 15.7 19.8H1.2Q0.4 19.8 0.4 19V1.3Q0.4 0.5 1.2 0.5Z" fill="#fdfdfd" stroke="#a8a8a8" stroke-width="0.8"/><g stroke="#2e8b3a" stroke-width="1.5" fill="none"><path d="M6.6 5.3L5.3 14.5M10.6 5.3L9.3 14.5M3.8 8.3H12.6M3.4 11.4H12.2"/></g></g></svg>
<div class="t" style="left:814.8px;top:114.5px;font-size:9.3px;letter-spacing:0.08px;color:#1a1a1a;-webkit-text-stroke:0.1px currentColor">Print Console (Mono Script)</div>
<svg style="left:1003.5px;top:113.5px" width="8" height="8" viewBox="0 0 8 8"><circle cx="4" cy="4" r="3.8" fill="#4c4c4c"/><path d="M2.7 3Q2.7 1.7 4 1.7Q5.3 1.7 5.3 2.9Q5.3 3.7 4.2 4.2V4.9" fill="none" stroke="#ddd" stroke-width="1"/><rect x="3.6" y="5.6" width="1.1" height="1" fill="#ddd"/></svg>
<svg style="left:1017.3px;top:113.5px" width="3" height="9" viewBox="0 0 3 9"><g fill="#444"><circle cx="1.5" cy="1.2" r="0.8"/><circle cx="1.5" cy="4.5" r="0.8"/><circle cx="1.5" cy="7.8" r="0.8"/></g></svg>
<div class="a" style="left:785px;top:145px;width:239px;height:1px;background:#a3a3a3"></div>
<!-- assembly -->
<div class="a" style="left:785px;top:146px;width:239px;height:28px;background:#c2c2c2"></div>
<div class="t" style="left:797px;top:147.5px;font-weight:bold;letter-spacing:0px;-webkit-text-stroke:0">Assembly Information</div>
<div class="t" style="left:797px;top:160.5px;letter-spacing:0.12px">Filename</div>
<div class="t" style="left:879.7px;top:160.5px;letter-spacing:0.12px">Assembly-CSharp.dll</div>
<!-- code -->
<div class="a" style="left:784px;top:174px;width:240px;height:188px;background:#dedede;border-top:1px solid #8c8c8c;border-left:1px solid #777;border-bottom:1px solid #777"></div>
<div class="t" style="left:786.4px;top:177.40px;letter-spacing:0.1px;color:#111">using System.Collections;</div>
<div class="t" style="left:786.4px;top:186.95px;letter-spacing:0.1px;color:#111">using System.Collections.Generic;</div>
<div class="t" style="left:786.4px;top:196.50px;letter-spacing:0.1px;color:#111">using UnityEngine;</div>
<div class="t" style="left:786.4px;top:215.60px;letter-spacing:0.1px;color:#111">public class PrintConsole : MonoBehaviour</div>
<div class="t" style="left:786.4px;top:225.15px;letter-spacing:0.1px;color:#111">{</div>
<div class="t" style="left:795.0px;top:234.70px;letter-spacing:0.1px;color:#111">// Start is called before the first frame update</div>
<div class="t" style="left:795.0px;top:244.25px;letter-spacing:0.1px;color:#111">void Start()</div>
<div class="t" style="left:795.0px;top:253.80px;letter-spacing:0.1px;color:#111">{</div>
<div class="t" style="left:803.6px;top:263.35px;letter-spacing:0.1px;color:#111">Debug.Log("Why all of us look same?");</div>
<div class="t" style="left:795.0px;top:272.90px;letter-spacing:0.1px;color:#111">}</div>
<div class="t" style="left:795.0px;top:292.00px;letter-spacing:0.1px;color:#111">// Update is called once per frame</div>
<div class="t" style="left:795.0px;top:301.55px;letter-spacing:0.1px;color:#111">void Update()</div>
<div class="t" style="left:795.0px;top:311.10px;letter-spacing:0.1px;color:#111">{</div>
<div class="t" style="left:795.0px;top:330.20px;letter-spacing:0.1px;color:#111">}</div>
<div class="t" style="left:786.4px;top:339.75px;letter-spacing:0.1px;color:#111">}</div>
<!-- asset labels -->
<div class="a" style="left:785px;top:468px;width:239px;height:1px;background:#a9a9a9"></div>
<div class="a" style="left:785px;top:469px;width:239px;height:13px;background:#cbcbcb"></div>
<div class="t" style="left:789px;top:470.5px;font-weight:bold;letter-spacing:0.12px;-webkit-text-stroke:0">Asset Labels</div>
<div class="a" style="left:785px;top:482px;width:239px;height:1px;background:#a9a9a9"></div>
<div class="a" style="left:785px;top:483px;width:239px;height:19px;background:#cbcbcb"></div>
<svg style="left:1008px;top:486px" width="14" height="10" viewBox="0 0 14 10"><rect x="0" y="0" width="14" height="10" rx="5" fill="#2d5fb8"/><path d="M4 3.2L6.5 2.5L10 5.8L7.8 8L4.5 4.8Z" fill="#fff"/><circle cx="5.6" cy="3.7" r="0.6" fill="#2d5fb8"/></svg>


<!-- ============ STATUS BAR ============ -->
<div class="a" style="left:0;top:502px;width:1024px;height:15px;background:#8a8a8a"></div>
<div class="a" style="left:0;top:516px;width:1024px;height:1px;background:#5a5a5a"></div>
<svg style="left:3px;top:504.5px" width="9" height="10" viewBox="0 0 9 10"><circle cx="4.3" cy="4.3" r="4" fill="#fff"/><path d="M6 7L8.5 9.5L5 8.3Z" fill="#fff"/><rect x="3.7" y="1.8" width="1.3" height="3.6" fill="#222"/><rect x="3.7" y="6.1" width="1.3" height="1.2" fill="#222"/></svg>
<div class="t" style="left:13.5px;top:504.5px;letter-spacing:0.12px">Why all of us look same?</div>
<div class="a" style="left:955px;top:502px;width:1px;height:14px;background:#9a9a9a"></div>
<div class="a" style="left:971.5px;top:502px;width:1px;height:14px;background:#9a9a9a"></div>
<div class="a" style="left:989.5px;top:502px;width:1px;height:14px;background:#9a9a9a"></div>
<div class="a" style="left:1006px;top:502px;width:1px;height:14px;background:#9a9a9a"></div>
<div class="a" style="left:1022.5px;top:502px;width:1px;height:14px;background:#9a9a9a"></div>
<svg style="left:958px;top:504.5px" width="10" height="10" viewBox="0 0 10 10"><g stroke="#4a4a4a" stroke-width="0.9" fill="none"><path d="M1 2L3 3.5M9 2L7 3.5M0.5 5.5H2.5M9.5 5.5H7.5M1 9L3 7.5M9 9L7 7.5"/><path d="M0.5 0.5L9.5 9.5"/></g><ellipse cx="5" cy="5.5" rx="2.3" ry="3.2" fill="#4a4a4a"/></svg>
<svg style="left:975px;top:504.5px" width="10" height="10" viewBox="0 0 10 10"><g fill="none" stroke="#4a4a4a" stroke-width="1"><ellipse cx="4.5" cy="2.2" rx="3.8" ry="1.6"/><path d="M0.7 2.2V5.2Q4.5 7.5 8.3 5.2V2.2M0.7 5.2V8Q4.5 10.2 8.3 8"/><path d="M7 7.5L9.5 9.8"/></g></svg>
<svg style="left:993px;top:504.5px" width="10" height="10" viewBox="0 0 10 10"><g fill="none" stroke="#4a4a4a" stroke-width="0.9"><path d="M1.5 3Q5 0 8.5 3M1 5Q1 9.5 5 9.5Q9 9.5 9 5"/><circle cx="5" cy="5" r="2"/><path d="M0.5 0.5L9.5 9.5"/></g></svg>
<svg style="left:1009.5px;top:504.5px" width="10" height="10" viewBox="0 0 10 10"><circle cx="5" cy="5" r="4.3" fill="none" stroke="#4a4a4a" stroke-width="0.9"/><path d="M2.8 5.2L4.4 6.8L7.3 3.6" fill="none" stroke="#4a4a4a" stroke-width="1"/></svg>

</body></html>
